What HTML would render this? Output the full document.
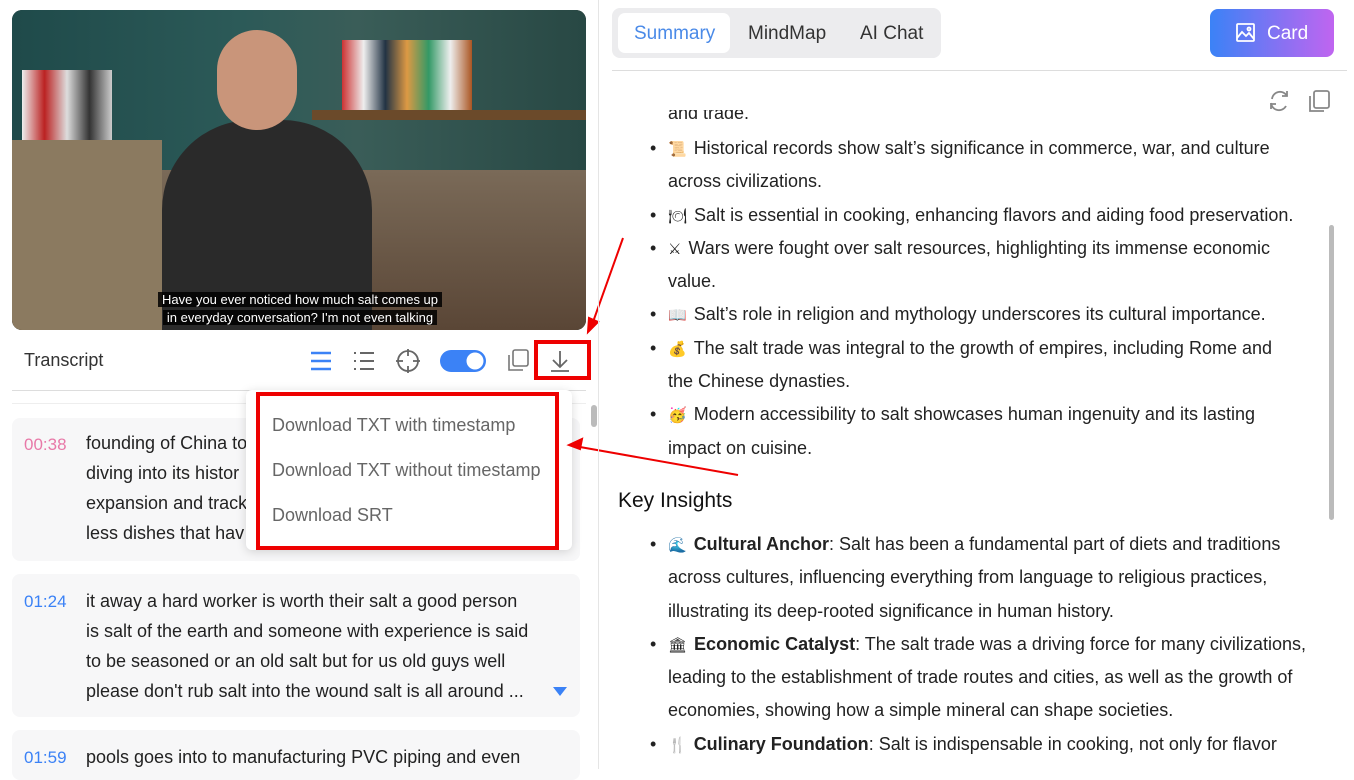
<!DOCTYPE html>
<html><head><meta charset="utf-8"><style>
*{margin:0;padding:0;box-sizing:border-box}
body{width:1354px;height:769px;overflow:hidden;background:#fff;font-family:"Liberation Sans",sans-serif;position:relative;color:#222}
.a{position:absolute}
.video{left:12px;top:10px;width:574px;height:320px;border-radius:10px;overflow:hidden;background:#111}
.cap{background:rgba(0,0,0,.85);color:#fff;font-size:13px;padding:0 4px;line-height:18px}
.card{left:12px;width:568px;background:#f7f7f8;border-radius:8px}
.ts{font-size:17px;color:#3b82f6}
.tt{font-size:18px;line-height:30px;color:#222}
.menu div{font-size:18px;color:#666;height:45px;line-height:45px;padding-left:26px}
.r{font-size:18px;line-height:33.3px;color:#222;white-space:nowrap}
ul{list-style:none}
li{position:relative;padding-left:50px}
li:before{content:"•";position:absolute;left:32px}
.e{font-size:15px;line-height:1;margin-right:7px;display:inline-block;vertical-align:baseline}
</style></head><body>
<div class="a video">
 <div class="a" style="left:0;top:0;width:574px;height:320px;background:linear-gradient(90deg,#1f4a4a 0%,#2c5a58 40%,#3a5d58 60%,#284844 100%)"></div>
 <div class="a" style="left:0;top:160px;width:574px;height:160px;background:linear-gradient(180deg,#7a6a58,#5a4636)"></div>
 <div class="a" style="left:0;top:130px;width:150px;height:190px;background:#8b7a60"></div>
 <div class="a" style="left:300px;top:100px;width:274px;height:10px;background:#6b4a2a"></div>
 <div class="a" style="left:330px;top:30px;width:130px;height:70px;background:linear-gradient(90deg,#c33,#eee,#234,#d94,#396,#eee,#a52)"></div>
 <div class="a" style="left:10px;top:60px;width:90px;height:70px;background:linear-gradient(90deg,#eee,#b22,#ddd,#333,#ccc)"></div>
 <div class="a" style="left:150px;top:110px;width:210px;height:210px;background:#2a2a2a;border-radius:90px 90px 0 0"></div>
 <div class="a" style="left:205px;top:20px;width:80px;height:100px;background:#c9957a;border-radius:40px"></div>
 <div class="a" style="left:130px;top:281px;text-align:center;width:316px">
  <span class="cap">Have you ever noticed how much salt comes up</span><br><span class="cap">in everyday conversation? I'm not even talking</span>
 </div>
</div>
<div class="a" style="left:24px;top:350px;font-size:18px;color:#333">Transcript</div>
<svg class="a" style="left:308px;top:338px" width="290" height="48">
 <g transform="translate(0,10)">
 <g stroke="#3b82f6" stroke-width="2.5"><line x1="3" y1="5" x2="23" y2="5"/><line x1="3" y1="13" x2="23" y2="13"/><line x1="3" y1="21" x2="23" y2="21"/></g>
 <g stroke="#666" stroke-width="2"><line x1="52" y1="5" x2="66" y2="5"/><line x1="52" y1="13" x2="66" y2="13"/><line x1="52" y1="21" x2="66" y2="21"/><line x1="46" y1="5" x2="48" y2="5"/><line x1="46" y1="13" x2="48" y2="13"/><line x1="46" y1="21" x2="48" y2="21"/></g>
 <g stroke="#666" stroke-width="1.8" fill="none"><circle cx="100" cy="13" r="10"/><line x1="100" y1="1" x2="100" y2="8"/><line x1="100" y1="18" x2="100" y2="25"/><line x1="88" y1="13" x2="95" y2="13"/><line x1="105" y1="13" x2="112" y2="13"/></g>
 <rect x="132" y="2" width="46" height="22" rx="11" fill="#3b82f6"/><circle cx="167" cy="13" r="8.5" fill="#fff"/>
 <g stroke="#777" stroke-width="1.6" fill="none"><rect x="205" y="2" width="15" height="16" rx="2"/><path d="M201 7v15h14"/></g>
 <g stroke="#666" stroke-width="1.8" fill="none"><path d="M252 3v16M245 12l7 7 7-7M243 23h18"/></g>
 <rect x="228" y="-6" width="53" height="36" fill="none" stroke="#e00" stroke-width="4"/>
 </g>
</svg>
<div class="a" style="left:12px;top:390px;width:574px;height:1px;background:#ddd"></div>
<div class="a" style="left:12px;top:403px;width:574px;height:1px;background:#eee"></div>
<div class="a card" style="top:418px;height:143px"></div>
<div class="a ts" style="left:24px;top:435px;color:#e879a8">00:38</div>
<div class="a tt" style="left:86px;top:428px">founding of China to<br>diving into its histor<br>expansion and track<br>less dishes that hav</div>
<div class="a card" style="top:574px;height:143px"></div>
<div class="a ts" style="left:24px;top:592px">01:24</div>
<div class="a tt" style="left:86px;top:586px">it away a hard worker is worth their salt a good person<br>is salt of the earth and someone with experience is said<br>to be seasoned or an old salt but for us old guys well<br>please don't rub salt into the wound salt is all around ...</div>
<div class="a" style="left:553px;top:687px;width:0;height:0;border-left:7px solid transparent;border-right:7px solid transparent;border-top:9px solid #3b82f6"></div>
<div class="a card" style="top:730px;height:50px"></div>
<div class="a ts" style="left:24px;top:748px">01:59</div>
<div class="a tt" style="left:86px;top:742px">pools goes into to manufacturing PVC piping and even</div>
<div class="a" style="left:591px;top:405px;width:6px;height:22px;background:#bbb;border-radius:3px"></div>
<div class="a menu" style="left:246px;top:390px;width:326px;height:160px;background:#fff;border-radius:6px;box-shadow:0 2px 10px rgba(0,0,0,.15);padding-top:13px">
 <div>Download TXT with timestamp</div><div>Download TXT without timestamp</div><div>Download SRT</div>
</div>
<div class="a" style="left:256px;top:392px;width:303px;height:158px;border:4px solid #e00"></div>
<svg class="a" style="left:0;top:0" width="1354" height="769">
 <g stroke="#e00" stroke-width="2" fill="#e00">
  <line x1="623" y1="238" x2="593" y2="322"/><path d="M588 332l1-14 9 4z"/>
  <line x1="738" y1="475" x2="580" y2="447"/><path d="M569 445l13-6-2 10z"/>
 </g>
</svg>
<div class="a" style="left:598px;top:0;width:1px;height:769px;background:#e5e5e5"></div>
<div class="a" style="left:612px;top:8px;width:329px;height:50px;background:#ececee;border-radius:8px"></div>
<div class="a" style="left:618px;top:13px;width:112px;height:40px;background:#fff;border-radius:7px"></div>
<div class="a" style="left:634px;top:23px;font-size:19px;color:#4a8ae8">Summary</div>
<div class="a" style="left:748px;top:23px;font-size:19px;color:#333">MindMap</div>
<div class="a" style="left:860px;top:23px;font-size:19px;color:#333">AI Chat</div>
<div class="a" style="left:1210px;top:9px;width:124px;height:48px;border-radius:8px;background:linear-gradient(90deg,#3b82f6,#c065f0)"></div>
<svg class="a" style="left:1236px;top:23px" width="20" height="20"><g stroke="#fff" stroke-width="1.8" fill="none"><rect x="1" y="1" width="17" height="17" rx="1"/><path d="M1 15l5-6 4 4 3-3 5 6"/><circle cx="13" cy="6" r="1.5"/></g></svg>
<div class="a" style="left:1267px;top:23px;font-size:19px;color:#fff">Card</div>
<div class="a" style="left:612px;top:70px;width:735px;height:1px;background:#ddd"></div>
<svg class="a" style="left:1268px;top:88px" width="70" height="26"><g stroke="#888" stroke-width="1.8" fill="none"><path d="M19 8a8 8 0 0 0-15 3M3 15a8 8 0 0 0 15 3"/><path d="M19 3v5h-5M3 21v-5h5"/><rect x="46" y="3" width="15" height="17" rx="2"/><path d="M42 8v15h14"/></g></svg>
<div class="a" style="left:1329px;top:225px;width:5px;height:295px;background:#bbb;border-radius:3px"></div>
<div class="a r" style="left:618px;top:110px;width:640px;height:16px;overflow:hidden">
 <div style="padding-left:50px;margin-top:-13px">and trade.</div>
</div>
<ul class="a r" style="left:618px;top:132px;width:700px">
 <li><span class="e">📜</span>Historical records show salt’s significance in commerce, war, and culture<br>across civilizations.</li>
 <li><span class="e">🍽</span>Salt is essential in cooking, enhancing flavors and aiding food preservation.</li>
 <li><span class="e">⚔</span>Wars were fought over salt resources, highlighting its immense economic<br>value.</li>
 <li><span class="e">📖</span>Salt’s role in religion and mythology underscores its cultural importance.</li>
 <li><span class="e">💰</span>The salt trade was integral to the growth of empires, including Rome and<br>the Chinese dynasties.</li>
 <li><span class="e">🥳</span>Modern accessibility to salt showcases human ingenuity and its lasting<br>impact on cuisine.</li>
</ul>
<div class="a" style="left:618px;top:489px;font-size:21px;color:#111">Key Insights</div>
<ul class="a r" style="left:618px;top:528px;width:705px">
 <li><span class="e">🌊</span><b>Cultural Anchor</b>: Salt has been a fundamental part of diets and traditions<br>across cultures, influencing everything from language to religious practices,<br>illustrating its deep-rooted significance in human history.</li>
 <li><span class="e">🏛</span><b>Economic Catalyst</b>: The salt trade was a driving force for many civilizations,<br>leading to the establishment of trade routes and cities, as well as the growth of<br>economies, showing how a simple mineral can shape societies.</li>
 <li><span class="e">🍴</span><b>Culinary Foundation</b>: Salt is indispensable in cooking, not only for flavor</li>
</ul>
</body></html>
